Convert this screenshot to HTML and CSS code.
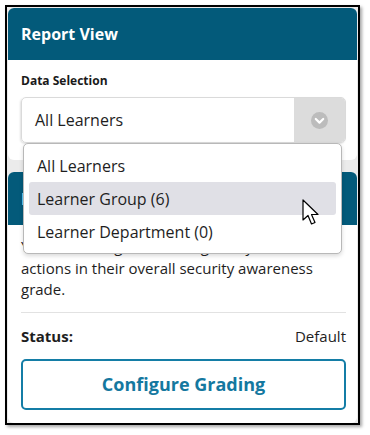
FILE: index.html
```html
<!DOCTYPE html>
<html lang="en">
<head>
    <meta charset="UTF-8">
    <meta name="viewport" content="width=device-width, initial-scale=1.0">
    <title>Report View</title>
    <link rel="stylesheet" href="styles.css">
</head>
<body>

    <div class="frame">
        <section class="card">
            <h2 class="card-head">Report View</h2>
            <div class="card-body">
                <div class="field-label">Data Selection</div>
                <div class="select-wrap">
                    <div class="select">
                        <span class="select-value">All Learners</span>
                        <span class="select-arrow">
                            <svg width="17" height="17" viewBox="0 0 17 17">
                                <circle cx="8.5" cy="8.5" r="8.5" fill="#bcbcbc"/>
                                <path d="M4.8 7 L8.5 10.6 L12.2 7" fill="none" stroke="#fff" stroke-width="2.2" stroke-linecap="round" stroke-linejoin="round"/>
                            </svg>
                        </span>
                    </div>
                    <ul class="menu">
                        <li>All Learners</li>
                        <li class="active">Learner Group (6)</li>
                        <li>Learner Department (0)</li>
                    </ul>
                    <!-- mouse pointer over the menu -->
                    <svg class="pointer" width="20" height="29" viewBox="0 0 20 29">
                        <path d="M1 1 L1 21 L6 16.5 L9.5 25 L13 23.5 L9.5 15.5 L16 15.5 Z" fill="#fff" stroke="#000" stroke-width="1.2" stroke-linejoin="round"/>
                    </svg>
                </div>
            </div>
        </section>

        <section class="card card-grow">
            <h2 class="card-head">Learner Grading</h2>
            <div class="card-body">
                <p class="desc">You can configure the weight of your users' actions in their overall security awareness grade.</p>
                <hr class="divider">
                <div class="status-row">
                    <span class="status-label">Status:</span>
                    <span>Default</span>
                </div>
                <button class="outline-btn">Configure Grading</button>
            </div>
        </section>
    </div>

</body>
</html>
```

FILE: styles.css
```css
body {
    margin: 0;
    font-family: "Open Sans", "Liberation Sans", Arial, sans-serif;
    background-color: #fff;
    color: #1e1e1e;
}
.frame {
    box-sizing: border-box;
    width: 355px;
    height: 420px;
    margin: 5px;
    padding: 1px;
    border: 2px solid #000;
    background-color: #ebebeb;
    box-shadow: 2px 2px 3px rgba(0, 0, 0, 0.35);
    display: flex;
    flex-direction: column;
    gap: 12px;
    overflow: hidden;
}
.card {
    background: #fff;
    border-radius: 6px;
}
.card-grow {
    flex: 1;
}
.card-head {
    margin: 0;
    height: 52px;
    padding: 0 13px;
    display: flex;
    align-items: center;
    background-color: #035a7a;
    color: #fff;
    font-size: 16px;
    font-weight: 700;
    border-radius: 6px 6px 0 0;
}
.card-body {
    padding: 13px 11px 17px 13px;
}
.field-label {
    font-size: 12px;
    font-weight: 700;
    line-height: 16px;
    color: #1a1a1a;
}
.select-wrap {
    position: relative;
    margin-top: 8px;
}
.select {
    box-sizing: border-box;
    height: 46px;
    display: flex;
    border: 1px solid #dadada;
    border-radius: 5px;
    box-shadow: -1px 1px 2px rgba(0, 0, 0, 0.12);
    overflow: hidden;
}
.select-value {
    flex: 1;
    display: flex;
    align-items: center;
    padding-left: 13px;
    font-size: 16px;
}
.select-arrow {
    width: 51px;
    display: flex;
    align-items: center;
    justify-content: center;
    background-color: #dcdcdc;
}
.menu {
    position: absolute;
    top: 46px;
    left: 2px;
    width: 319px;
    box-sizing: border-box;
    margin: 0;
    padding: 5px;
    list-style: none;
    background: #fff;
    border: 1px solid #b8b8b8;
    border-radius: 5px;
    box-shadow: 0 2px 4px rgba(0, 0, 0, 0.15);
    z-index: 2;
}
.menu li {
    height: 33px;
    display: flex;
    align-items: center;
    padding-left: 8px;
    font-size: 16px;
    border-radius: 3px;
}
.menu li.active {
    background-color: #e0e0e6;
}
.pointer {
    position: absolute;
    left: 281px;
    top: 102px;
    z-index: 3;
}
.card-grow .card-head {
    height: 53px;
}
.card-grow .card-body {
    padding: 11px 11px 13px 13px;
}
.desc {
    margin: 0;
    font-size: 15px;
    line-height: 21.5px;
}
.divider {
    margin: 11px 0 0;
    border: none;
    border-top: 1px solid #e2e2e2;
}
.status-row {
    margin-top: 13px;
    display: flex;
    justify-content: space-between;
    font-size: 15px;
    line-height: 20px;
}
.status-label {
    font-weight: 700;
}
.outline-btn {
    display: block;
    width: 100%;
    height: 51px;
    margin-top: 13px;
    border: 2px solid #147da6;
    border-radius: 5px;
    background: #fff;
    color: #14789f;
    font-family: inherit;
    font-size: 18px;
    font-weight: 700;
    cursor: pointer;
}
```
